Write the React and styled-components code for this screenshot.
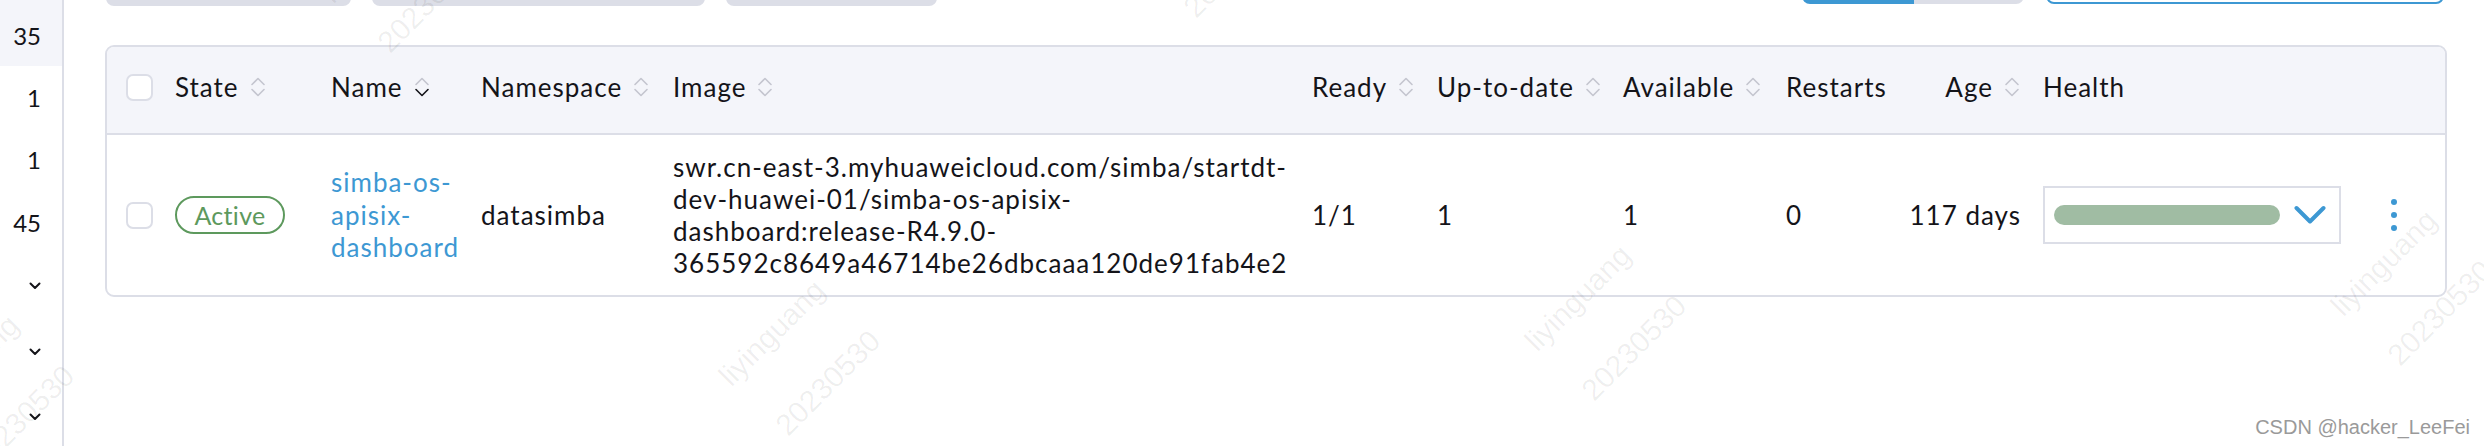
import styled, { createGlobalStyle } from "styled-components";

const GlobalStyle = createGlobalStyle`
  html, body {
    margin: 0;
    padding: 0;
    background: #fff;
    overflow: hidden;
  }
  body {
    font-family: Lato, "Liberation Sans", sans-serif;
    color: #141419;
  }
`;

const Page = styled.div`
  position: relative;
  display: flex;
  width: 2484px;
  height: 446px;
  overflow: hidden;
`;

const Sidebar = styled.nav`
  width: 62px;
  flex: 0 0 62px;
  border-right: 2px solid #dcdee7;
  display: flex;
  flex-direction: column;
`;

const SideItem = styled.div`
  height: ${(p) => p.$h}px;
  flex: 0 0 auto;
  display: flex;
  align-items: center;
  justify-content: flex-end;
  padding-right: 21px;
  padding-top: ${(p) => (p.$active ? 4 : 0)}px;
  box-sizing: border-box;
  background: ${(p) => (p.$active ? "#f4f5fa" : "transparent")};
  font-size: 24px;
  color: #141419;
`;

const Main = styled.main`
  flex: 1;
  padding: 0 37px 0 41px;
  display: flex;
  flex-direction: column;
`;

const Toolbar = styled.div`
  margin-top: -34px;
  height: 40px;
  display: flex;
  justify-content: space-between;
`;

const ToolGroup = styled.div`
  display: flex;
  gap: ${(p) => p.$gap}px;
  margin-left: ${(p) => p.$ml || 0}px;
  margin-right: ${(p) => p.$mr || 0}px;
`;

const Pill = styled.div`
  width: ${(p) => p.$w}px;
  height: 40px;
  border-radius: 8px;
  background: #dcdee7;
`;

const Toggle = styled.div`
  display: flex;
  height: 38px;
  border-radius: 8px;
  overflow: hidden;
`;

const ToggleHalf = styled.div`
  width: ${(p) => p.$w}px;
  background: ${(p) => (p.$on ? "#3d98d3" : "#dcdee7")};
`;

const SearchBox = styled.div`
  width: 398px;
  height: 38px;
  box-sizing: border-box;
  border: 2px solid #3d98d3;
  border-radius: 8px;
`;

const Table = styled.div`
  margin-top: 39px;
  border: 2px solid #dcdee7;
  border-radius: 9px;
  overflow: hidden;
`;

const cols = "49px 156px 150px 192px 639px 125px 186px 163px 107px 150px 327px 48px 1fr";

const HeadRow = styled.div`
  display: grid;
  grid-template-columns: ${cols};
  align-items: center;
  height: 86px;
  box-sizing: border-box;
  padding: 0 0 6px 19px;
  background: #f4f5fa;
  border-bottom: 2px solid #dcdee7;
  font-size: 26px;
  letter-spacing: 1px;
  box-sizing: content-box;
  height: 80px;
`;

const BodyRow = styled.div`
  display: grid;
  grid-template-columns: ${cols};
  align-items: center;
  height: 160px;
  padding-left: 19px;
  font-size: 26px;
  letter-spacing: 1px;
  line-height: 32px;
`;

const HeadCell = styled.div`
  display: flex;
  align-items: center;
  justify-content: ${(p) => (p.$right ? "flex-end" : "flex-start")};
  padding-right: ${(p) => (p.$right ? 23 : 0)}px;
  white-space: nowrap;
`;

const Cell = styled.div`
  text-align: ${(p) => (p.$right ? "right" : "left")};
  padding-right: ${(p) => (p.$right ? 22 : 0)}px;
  white-space: nowrap;
`;

const Check = styled.div`
  width: 27px;
  height: 27px;
  box-sizing: border-box;
  border: 2px solid #dcdee7;
  border-radius: 7px;
  background: #fff;
`;

const SortWrap = styled.span`
  display: inline-flex;
  margin-left: 11px;
`;

const Badge = styled.span`
  display: inline-flex;
  align-items: center;
  justify-content: center;
  width: 110px;
  height: 38px;
  box-sizing: border-box;
  border: 2px solid #5d995d;
  border-radius: 19px;
  color: #5d995d;
  font-size: 25px;
  letter-spacing: 0.3px;
`;

const NameLink = styled.a`
  color: #3d98d3;
  text-decoration: none;
  line-height: 31.5px;
`;

const HealthBox = styled.div`
  width: 298px;
  height: 58px;
  box-sizing: border-box;
  border: 2px solid #dcdee7;
  display: flex;
  align-items: center;
  padding-left: 9px;
  gap: 14px;
`;

const HealthBar = styled.div`
  width: 226px;
  height: 20px;
  border-radius: 10px;
  background: #a0bca3;
`;

const Kebab = styled.div`
  display: flex;
  flex-direction: column;
  align-items: center;
  gap: 7px;
`;

const Dot = styled.span`
  width: 6px;
  height: 6px;
  border-radius: 50%;
  background: #3d98d3;
`;

const MarkLayer = styled.div`
  position: absolute;
  inset: 0;
  pointer-events: none;
  overflow: hidden;
`;

const Mark = styled.span`
  position: absolute;
  left: ${(p) => p.$x}px;
  top: ${(p) => p.$y}px;
  transform: translate(-50%, -50%) rotate(-45deg);
  font-family: "Liberation Sans", Arial, sans-serif;
  font-size: 30px;
  color: rgba(0, 0, 0, 0.065);
  white-space: nowrap;
`;

const Credit = styled.span`
  position: absolute;
  right: 14px;
  bottom: 7px;
  font-family: "Liberation Sans", Arial, sans-serif;
  font-size: 20px;
  color: #9a9a9a;
`;

const SortIcon = ({ active }) => (
  <svg width="16" height="24" viewBox="0 0 16 24" fill="none" strokeWidth="1.6" strokeLinecap="round" strokeLinejoin="round">
    <path d="M2 9.5 L8 3.5 L14 9.5" stroke="#c4c5cf" />
    <path d="M2 14.5 L8 20.5 L14 14.5" stroke={active ? "#141419" : "#c4c5cf"} />
  </svg>
);

const SideChevron = () => (
  <svg width="12" height="8" viewBox="0 0 12 8" fill="none">
    <path d="M1.5 1.5 L6 6 L10.5 1.5" stroke="#141419" strokeWidth="2" strokeLinecap="round" strokeLinejoin="round" />
  </svg>
);

const BlueChevron = () => (
  <svg width="32" height="20" viewBox="0 0 32 20" fill="none">
    <path d="M2.5 3 L16 16.5 L29.5 3" stroke="#3d98d3" strokeWidth="4" strokeLinecap="round" strokeLinejoin="round" />
  </svg>
);

const sideItems = [
  { h: 66, label: "35", active: true },
  { h: 62.5, label: "1" },
  { h: 62.5, label: "1" },
  { h: 62.5, label: "45" },
  { h: 65.5, chevron: true },
  { h: 65.5, chevron: true },
  { h: 65.5, chevron: true },
];

// watermark tiles: word centre, second word sits below-right of the first
const tiles = [
  [-34, 368], [772, 333], [1578, 298], [2384, 263],
  [-432, -15], [374, -50], [1180, -85], [1986, -120],
];

const headers = [
  { label: "State", sort: true },
  { label: "Name", sort: true, active: true },
  { label: "Namespace", sort: true },
  { label: "Image", sort: true },
  { label: "Ready", sort: true },
  { label: "Up-to-date", sort: true },
  { label: "Available", sort: true },
  { label: "Restarts" },
  { label: "Age", sort: true, right: true },
  { label: "Health" },
];

export default function App() {
  return (
    <>
      <GlobalStyle />
      <Page>
        <Sidebar>
          {sideItems.map((it, i) => (
            <SideItem key={i} $h={it.h} $active={it.active}>
              {it.chevron ? <SideChevron /> : it.label}
            </SideItem>
          ))}
        </Sidebar>
        <Main>
          <Toolbar>
            <ToolGroup $gap={21} $ml={1}>
              <Pill $w={245} />
              <Pill $w={333} />
              <Pill $w={211} />
            </ToolGroup>
            <ToolGroup $gap={22} $mr={3}>
              <Toggle>
                <ToggleHalf $w={112} $on />
                <ToggleHalf $w={110} />
              </Toggle>
              <SearchBox />
            </ToolGroup>
          </Toolbar>
          <Table>
            <HeadRow>
              <HeadCell><Check /></HeadCell>
              {headers.map((h) => (
                <HeadCell key={h.label} $right={h.right}>
                  {h.label}
                  {h.sort && (
                    <SortWrap><SortIcon active={h.active} /></SortWrap>
                  )}
                </HeadCell>
              ))}
              <HeadCell />
              <HeadCell />
            </HeadRow>
            <BodyRow>
              <Cell><Check /></Cell>
              <Cell><Badge>Active</Badge></Cell>
              <Cell>
                <NameLink href="#">simba-os-<br />apisix-<br />dashboard</NameLink>
              </Cell>
              <Cell>datasimba</Cell>
              <Cell>
                swr.cn-east-3.myhuaweicloud.com/simba/startdt-<br />
                dev-huawei-01/simba-os-apisix-<br />
                dashboard:release-R4.9.0-<br />
                365592c8649a46714be26dbcaaa120de91fab4e2
              </Cell>
              <Cell>1/1</Cell>
              <Cell>1</Cell>
              <Cell>1</Cell>
              <Cell>0</Cell>
              <Cell $right>117 days</Cell>
              <Cell>
                <HealthBox>
                  <HealthBar />
                  <BlueChevron />
                </HealthBox>
              </Cell>
              <Cell>
                <Kebab><Dot /><Dot /><Dot /></Kebab>
              </Cell>
              <Cell />
            </BodyRow>
          </Table>
        </Main>
        <MarkLayer>
          {tiles.map(([x, y], i) => (
            <span key={i}>
              <Mark $x={x} $y={y}>liyinguang</Mark>
              <Mark $x={x + 56} $y={y + 50}>20230530</Mark>
            </span>
          ))}
        </MarkLayer>
        <Credit>CSDN @hacker_LeeFei</Credit>
      </Page>
    </>
  );
}
